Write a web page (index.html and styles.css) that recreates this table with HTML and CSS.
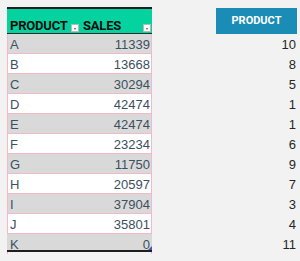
FILE: index.html
```html
<!DOCTYPE html>
<html>
<head>
<meta charset="utf-8">
<link rel="stylesheet" href="styles.css">
</head>
<body>
<div class="sheet">
  <div class="tbl">
    <div class="hdr">
      <div class="hcell prod">PRODUCT<span class="dd"></span></div>
      <div class="hcell sales">SALES<span class="dd"></span></div>
    </div>
    <div class="row g"><span>A</span><span class="num">11339</span></div>
    <div class="row w"><span>B</span><span class="num">13668</span></div>
    <div class="row g"><span>C</span><span class="num">30294</span></div>
    <div class="row w"><span>D</span><span class="num">42474</span></div>
    <div class="row g"><span>E</span><span class="num">42474</span></div>
    <div class="row w"><span>F</span><span class="num">23234</span></div>
    <div class="row g"><span>G</span><span class="num">11750</span></div>
    <div class="row w"><span>H</span><span class="num">20597</span></div>
    <div class="row g"><span>I</span><span class="num">37904</span></div>
    <div class="row w"><span>J</span><span class="num">35801</span></div>
    <div class="row g last"><span>K</span><span class="num">0</span><span class="handle"></span></div>
  </div>
  <div class="side">
    <div class="shdr">PRODUCT</div>
    <div class="srow">10</div>
    <div class="srow">8</div>
    <div class="srow">5</div>
    <div class="srow">1</div>
    <div class="srow">1</div>
    <div class="srow">6</div>
    <div class="srow">9</div>
    <div class="srow">7</div>
    <div class="srow">3</div>
    <div class="srow">4</div>
    <div class="srow">11</div>
  </div>
</div>
</body>
</html>
```
FILE: styles.css
```css
* { box-sizing: border-box; }
html, body { margin: 0; padding: 0; }
body {
  background: #f2f2f2;
  width: 300px;
  height: 261px;
  overflow: hidden;
  font-family: "Liberation Sans", Arial, sans-serif;
}
.sheet {
  display: flex;
  padding: 7px 0 0 7px;
  gap: 64px;
}
.tbl {
  width: 145px;
  display: flex;
  flex-direction: column;
  border-left: 1px solid #f2b9c6;
  border-right: 1px solid #f2b9c6;
}
.hdr {
  display: flex;
  height: 27px;
  background: #05d39f;
  border-top: 2px solid #1e1e1e;
  border-bottom: 1px solid #2a2a2a;
  margin: 0 -1px;
}
.hcell {
  position: relative;
  font-family: Roboto, "Liberation Sans", sans-serif;
  font-weight: bold;
  font-size: 13px;
  color: #0d0d0d;
  padding: 9px 0 0 3px;
  letter-spacing: -0.2px;
}
.prod { width: 73px; }
.sales { flex: 1; }
.dd {
  position: absolute;
  right: 1px;
  bottom: 1px;
  width: 8px;
  height: 8px;
  background: #fbfbfb;
  border: 1px solid #b8b8b8;
}
.dd::after {
  content: "";
  position: absolute;
  left: 2px;
  top: 3px;
  border-left: 1.5px solid transparent;
  border-right: 1.5px solid transparent;
  border-top: 2px solid #555;
}
.row {
  position: relative;
  display: flex;
  justify-content: space-between;
  height: 20px;
  padding: 3px 1px 0 2px;
  font-size: 13px;
  color: #3b5060;
  border-bottom: 1px solid #f2b9c6;
}
.row.g { background: #d9d9d9; }
.row.w { background: #ffffff; }
.row.last {
  height: 18px;
  border-bottom: 2px solid #1e1e1e;
  margin: 0 -1px;
  padding-left: 3px;
  padding-right: 2px;
}
.handle {
  position: absolute;
  right: 0;
  bottom: 0;
  border-left: 4px solid transparent;
  border-bottom: 4px solid #3b5bb5;
}
.side {
  width: 81px;
  display: flex;
  flex-direction: column;
  padding-top: 1px;
}
.shdr {
  height: 26px;
  background: #1a8cb6;
  color: #ffffff;
  font-family: Roboto, "Liberation Sans", sans-serif;
  font-weight: bold;
  font-size: 11px;
  display: flex;
  align-items: center;
  justify-content: center;
  padding-bottom: 1px;
}
.srow {
  height: 20px;
  text-align: right;
  font-size: 13px;
  color: #262626;
  padding: 3px 1px 0 0;
}
```
